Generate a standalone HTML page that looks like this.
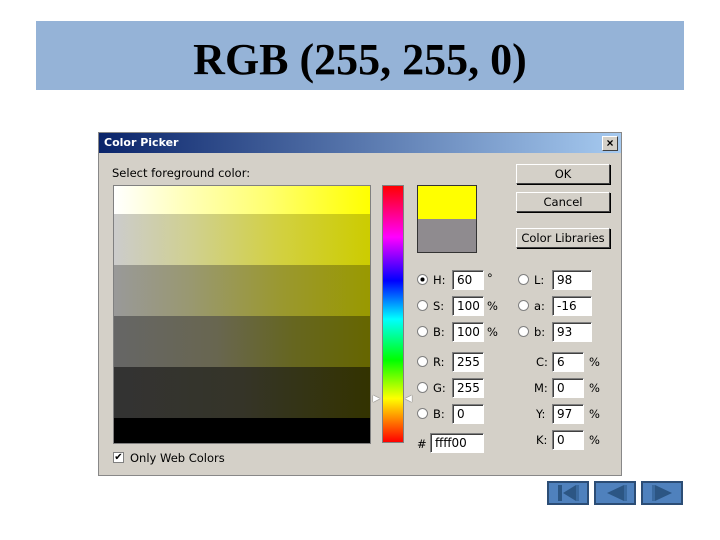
<!DOCTYPE html>
<html><head><style>
body{margin:0;width:720px;height:540px;background:#fff;position:relative;overflow:hidden;font-family:"DejaVu Sans","Liberation Sans",sans-serif}
.a{position:absolute}
.hdr{left:36px;top:21px;width:648px;height:69px;background:#95b3d7;text-align:center;font:bold 44px "Liberation Serif",serif;line-height:78px;color:#000}
.dlg{left:98px;top:132px;width:522px;height:342px;background:#d4d0c8;border:1px solid #888}
.title{left:0;top:0;width:522px;height:20px;background:linear-gradient(90deg,#0a246a,#a6caf0);color:#fff;font:bold 11px "DejaVu Sans",sans-serif;line-height:20px;text-indent:5px}
.x{right:3px;top:3px;width:14px;height:13px;background:#d4d0c8;border:1px solid #fff;border-right-color:#404040;border-bottom-color:#404040;font:bold 12px sans-serif;line-height:12px;text-align:center;color:#000}
.t{font-size:11.5px;color:#000;line-height:14px}
.btn{width:92px;height:18px;border:1px solid #fff;border-right-color:#404040;border-bottom-color:#404040;box-shadow:1px 1px 0 #000;background:#d4d0c8;text-align:center;font-size:11.5px;line-height:18px}
.fld{height:18px;background:#fff;border:1px solid #808080;border-right-color:#fff;border-bottom-color:#fff;box-shadow:inset 1px 1px 0 #404040;font-size:12px;line-height:19px;text-indent:4px}
.rad{width:9px;height:9px;border-radius:50%;background:#fff;border:1px solid #808080}
.band{left:0;width:256px}
.nav{width:38px;height:20px;background:#4f81bd;border:2px solid #2c4d75}
</style></head><body>
<div class="a hdr">RGB (255, 255, 0)</div>
<div class="a dlg">
<div class="a title">Color Picker</div>
<div class="a x">×</div>
<div class="a t" style="left:13px;top:33px">Select foreground color:</div>
<div class="a" style="left:14px;top:52px;width:256px;height:257px;border:1px solid #808080;overflow:hidden">
<div class="a band" style="top:0;height:28px;background:linear-gradient(90deg,#fff,#ffffc0 25%,#ffff70 60%,#ffff00)"></div>
<div class="a band" style="top:28px;height:51px;background:linear-gradient(90deg,#ccc,#d0d090 30%,#d2d040 65%,#cccc00)"></div>
<div class="a band" style="top:79px;height:51px;background:linear-gradient(90deg,#999,#999870 30%,#9a9830 65%,#999900)"></div>
<div class="a band" style="top:130px;height:51px;background:linear-gradient(90deg,#666,#686650 40%,#666620 70%,#666600)"></div>
<div class="a band" style="top:181px;height:51px;background:linear-gradient(90deg,#333,#353428 50%,#333300)"></div>
<div class="a band" style="top:232px;height:25px;background:#000"></div>
</div>
<div class="a" style="left:283px;top:52px;width:20px;height:256px;border:1px solid #808080;background:linear-gradient(#ff0000,#ff00ff 20%,#0000ff 37%,#00ffff 52%,#00ff00 68%,#ffff00 83%,#ff0000)"></div>
<div class="a" style="left:274px;top:261px;font-size:9px;color:#fff;text-shadow:0 0 1px #000">▶</div>
<div class="a" style="left:306px;top:261px;font-size:9px;color:#fff;text-shadow:0 0 1px #000">◀</div>
<div class="a" style="left:318px;top:52px;width:58px;height:66px;border:1px solid #333"><div style="height:33px;background:#ffff00"></div><div style="height:33px;background:#8f8b8f"></div></div>
<div class="a btn" style="left:417px;top:31px">OK</div>
<div class="a btn" style="left:417px;top:59px">Cancel</div>
<div class="a btn" style="left:417px;top:95px">Color Libraries</div>

<div class="a rad" style="left:318px;top:141px;background:radial-gradient(#000 30%,#fff 35%)"></div><div class="a t" style="left:334px;top:140px">H:</div><div class="a fld" style="left:353px;top:137px;width:30px">60</div><div class="a t" style="left:388px;top:138px">°</div>
<div class="a rad" style="left:318px;top:167px"></div><div class="a t" style="left:334px;top:166px">S:</div><div class="a fld" style="left:353px;top:163px;width:30px">100</div><div class="a t" style="left:388px;top:166px">%</div>
<div class="a rad" style="left:318px;top:193px"></div><div class="a t" style="left:334px;top:192px">B:</div><div class="a fld" style="left:353px;top:189px;width:30px">100</div><div class="a t" style="left:388px;top:192px">%</div>
<div class="a rad" style="left:318px;top:223px"></div><div class="a t" style="left:334px;top:222px">R:</div><div class="a fld" style="left:353px;top:219px;width:30px">255</div>
<div class="a rad" style="left:318px;top:249px"></div><div class="a t" style="left:334px;top:248px">G:</div><div class="a fld" style="left:353px;top:245px;width:30px">255</div>
<div class="a rad" style="left:318px;top:275px"></div><div class="a t" style="left:334px;top:274px">B:</div><div class="a fld" style="left:353px;top:271px;width:30px">0</div>
<div class="a t" style="left:318px;top:304px">#</div><div class="a fld" style="left:331px;top:300px;width:52px">ffff00</div>

<div class="a rad" style="left:419px;top:141px"></div><div class="a t" style="left:435px;top:140px">L:</div><div class="a fld" style="left:453px;top:137px;width:38px">98</div>
<div class="a rad" style="left:419px;top:167px"></div><div class="a t" style="left:435px;top:166px">a:</div><div class="a fld" style="left:453px;top:163px;width:38px">-16</div>
<div class="a rad" style="left:419px;top:193px"></div><div class="a t" style="left:435px;top:192px">b:</div><div class="a fld" style="left:453px;top:189px;width:38px">93</div>
<div class="a t" style="left:437px;top:222px">C:</div><div class="a fld" style="left:453px;top:219px;width:30px">6</div><div class="a t" style="left:490px;top:222px">%</div>
<div class="a t" style="left:435px;top:248px">M:</div><div class="a fld" style="left:453px;top:245px;width:30px">0</div><div class="a t" style="left:490px;top:248px">%</div>
<div class="a t" style="left:437px;top:274px">Y:</div><div class="a fld" style="left:453px;top:271px;width:30px">97</div><div class="a t" style="left:490px;top:274px">%</div>
<div class="a t" style="left:437px;top:300px">K:</div><div class="a fld" style="left:453px;top:297px;width:30px">0</div><div class="a t" style="left:490px;top:300px">%</div>

<div class="a" style="left:14px;top:319px;width:9px;height:9px;background:#fff;border:1px solid #808080;font-size:10px;line-height:9px;text-align:center">✔</div>
<div class="a t" style="left:31px;top:318px">Only Web Colors</div>
</div>
<div class="a nav" style="left:547px;top:481px"><svg width="38" height="20"><rect x="9" y="2" width="4" height="16" fill="#2c5684"/><path d="M27 2 L14 10 L27 18Z" fill="#2c5684"/><rect x="27" y="2" width="3" height="16" fill="#3a6aa0"/></svg></div>
<div class="a nav" style="left:594px;top:481px"><svg width="38" height="20"><path d="M28 2 L11 10 L28 18Z" fill="#2c5684"/><rect x="28" y="2" width="3" height="16" fill="#3a6aa0"/></svg></div>
<div class="a nav" style="left:641px;top:481px"><svg width="38" height="20"><path d="M12 2 L29 10 L12 18Z" fill="#2c5684"/><rect x="9" y="2" width="3" height="16" fill="#3a6aa0"/></svg></div>
</body></html>
